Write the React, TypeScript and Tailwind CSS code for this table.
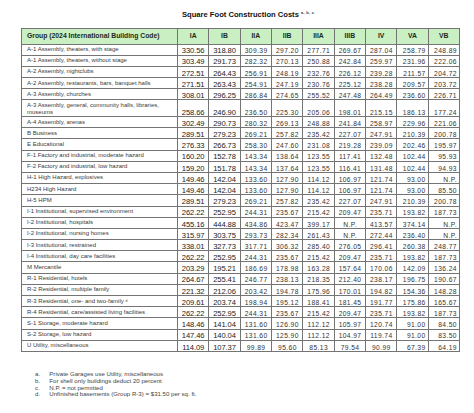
import React from "react";

type Row = { label: React.ReactNode; vals: string[]; tall?: boolean };

const raw: [React.ReactNode, string][] = [
  ["A-1 Assembly, theaters, with stage", "330.56 318.80 309.39 297.20 277.71 269.67 287.04 258.79 248.89"],
  ["A-1 Assembly, theaters, without stage", "303.49 291.73 282.32 270.13 250.88 242.84 259.97 231.96 222.06"],
  ["A-2 Assembly, nightclubs", "272.51 264.43 256.91 248.19 232.76 226.12 239.28 211.57 204.72"],
  ["A-2 Assembly, restaurants, bars, banquet halls", "271.51 263.43 254.91 247.19 230.76 225.12 238.28 209.57 203.72"],
  ["A-3 Assembly, churches", "308.01 296.25 286.84 274.65 255.52 247.48 264.49 236.60 226.71"],
  [
    <>
      A-3 Assembly, general, community halls, libraries,
      <br />
      museums
    </>,
    "258.66 246.90 236.50 225.30 205.06 198.01 215.15 186.13 177.24",
  ],
  ["A-4 Assembly, arenas", "302.49 290.73 280.32 269.13 248.88 241.84 258.97 229.96 221.06"],
  ["B Business", "289.51 279.23 269.21 257.82 235.42 227.07 247.91 210.39 200.78"],
  ["E Educational", "276.33 266.73 258.30 247.60 231.08 219.28 239.09 202.46 195.97"],
  ["F-1 Factory and industrial, moderate hazard", "160.20 152.78 143.34 138.64 123.55 117.41 132.48 102.44 95.93"],
  ["F-2 Factory and industrial, low hazard", "159.20 151.78 143.34 137.64 123.55 116.41 131.48 102.44 94.93"],
  ["H-1 High Hazard, explosives", "149.46 142.04 133.60 127.90 114.12 106.97 121.74 93.00 N.P."],
  ["H234 High Hazard", "149.46 142.04 133.60 127.90 114.12 106.97 121.74 93.00 85.50"],
  ["H-5 HPM", "289.51 279.23 269.21 257.82 235.42 227.07 247.91 210.39 200.78"],
  ["I-1 Institutional, supervised environment", "262.22 252.95 244.31 235.67 215.42 209.47 235.71 193.82 187.73"],
  ["I-2 Institutional, hospitals", "455.16 444.88 434.86 423.47 399.17 N.P. 413.57 374.14 N.P."],
  ["I-2 Institutional, nursing homes", "315.97 303.75 293.73 282.34 261.43 N.P. 272.44 236.40 N.P."],
  ["I-3 Institutional, restrained", "338.01 327.73 317.71 306.32 285.40 276.05 296.41 260.38 248.77"],
  ["I-4 Institutional, day care facilities", "262.22 252.95 244.31 235.67 215.42 209.47 235.71 193.82 187.73"],
  ["M Mercantile", "203.29 195.21 186.69 178.98 163.28 157.64 170.06 142.09 136.24"],
  ["R-1 Residential, hotels", "264.67 255.41 246.77 238.13 218.35 212.40 238.17 196.75 190.67"],
  ["R-2 Residential, multiple family", "221.32 212.06 203.42 194.78 175.96 170.01 194.82 154.36 148.28"],
  [
    <>
      R-3 Residential, one- and two-family{" "}
      <sup className="text-[3.5px] relative -top-[1px]">d</sup>
    </>,
    "209.61 203.74 198.94 195.12 188.41 181.45 191.77 175.86 165.67",
  ],
  ["R-4 Residential, care/assisted living facilities", "262.22 252.95 244.31 235.67 215.42 209.47 235.71 193.82 187.73"],
  ["S-1 Storage, moderate hazard", "148.46 141.04 131.60 126.90 112.12 105.97 120.74 91.00 84.50"],
  ["S-2 Storage, low hazard", "147.46 140.04 131.60 125.90 112.12 104.97 119.74 91.00 83.50"],
  ["U Utility, miscellaneous", "114.09 107.37 99.89 95.60 85.13 79.54 90.99 67.39 64.19"],
];

const rows: Row[] = raw.map(([label, v], i) => ({ label, vals: v.split(" "), tall: i === 5 }));

const heads = ["IA", "IB", "IIA", "IIB", "IIIA", "IIIB", "IV", "VA", "VB"];

const cellBorder = "border border-[#747474]";

export default function App() {
  return (
    <div className="w-[474px] h-[413px] bg-white pt-[10px] font-['Liberation_Sans',Arial,sans-serif] text-[#2a2a2a]">
      <div className="h-[17.5px] pl-[182px] flex items-start">
        <span className="text-[7.6px] leading-[10px] font-bold text-[#111]">Square Foot Construction Costs</span>
        <span className="text-[4px] leading-[6px] font-bold text-[#333] ml-[2px] tracking-[0.3px]">a, b, c</span>
      </div>
      <table className="table-fixed border-collapse w-[438px] ml-[21px]">
        <colgroup>
          <col className="w-[156px]" />
          {heads.map((h) => (
            <col key={h} className="w-[31.33px]" />
          ))}
        </colgroup>
        <thead>
          <tr className="h-[16px] bg-[#c9efc3]">
            <th className={`${cellBorder} p-0 pl-[5px] text-left text-[6.8px] leading-[8px] font-bold text-[#1d2b1d]`}>
              Group (2024 International Building Code)
            </th>
            {heads.map((h) => (
              <th key={h} className={`${cellBorder} p-0 text-center text-[6.8px] leading-[8px] font-bold text-[#1d2b1d]`}>
                {h}
              </th>
            ))}
          </tr>
        </thead>
        <tbody>
          {rows.map((r, i) => (
            <tr key={i} className={r.tall ? "h-[16.6px]" : "h-[11.2px]"}>
              <td className={`${cellBorder} p-0 pl-[5px] pt-[1.5px] align-top text-[6px] leading-[6.7px] text-[#3a3a3a] whitespace-nowrap`}>
                {r.label}
              </td>
              {r.vals.map((v, j) => {
                if (j < 2) {
                  return (
                    <td
                      key={j}
                      className={`${cellBorder} p-0 align-bottom text-center text-[7.6px] leading-[7.4px] tracking-[-0.1px] text-[#222]`}
                    >
                      {v}
                    </td>
                  );
                }
                const right = j >= 7;
                return (
                  <td
                    key={j}
                    className={`${cellBorder} p-0 align-bottom text-[6.7px] leading-[7.4px] tracking-[0.4px] text-[#333] ${
                      right ? "text-right pr-[2px]" : "text-center pl-[0.5px]"
                    }`}
                  >
                    {v}
                  </td>
                );
              })}
            </tr>
          ))}
        </tbody>
      </table>
      <div className="mt-[19px] ml-[35px] text-[6.1px] leading-[6.8px] text-[#444] grid grid-cols-[14.3px_1fr]">
        <span>a.</span>
        <span>Private Garages use Utility, miscellaneous</span>
        <span>b.</span>
        <span>For shell only buildings deduct 20 percent</span>
        <span>c.</span>
        <span>N.P. = not permitted</span>
        <span>d.</span>
        <span>Unfinished basements (Group R-3) = $31.50 per sq. ft.</span>
      </div>
    </div>
  );
}
